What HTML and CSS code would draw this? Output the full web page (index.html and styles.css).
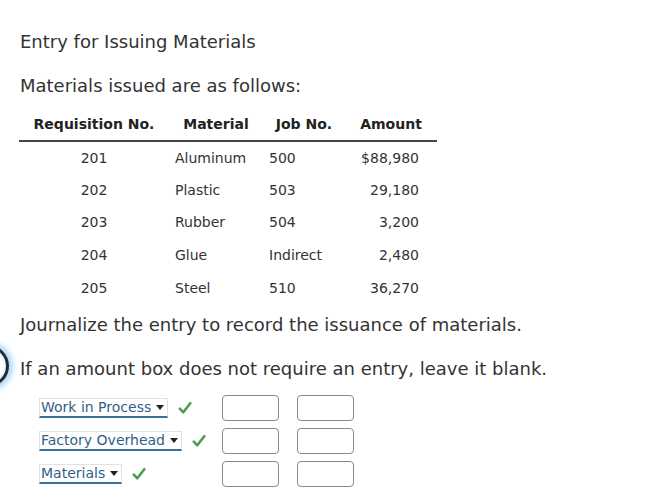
FILE: index.html
```html
<!DOCTYPE html>
<html>
<head>
<meta charset="utf-8">
<link rel="stylesheet" href="styles.css">
</head>
<body>
<div class="page">
  <h1 class="title">Entry for Issuing Materials</h1>
  <p class="para intro">Materials issued are as follows:</p>
  <table class="mat">
    <thead>
      <tr><th class="c1">Requisition No.</th><th class="c2">Material</th><th class="c3">Job No.</th><th class="c4">Amount</th></tr>
    </thead>
    <tbody>
      <tr><td class="c1">201</td><td class="c2">Aluminum</td><td class="c3">500</td><td class="c4">$88,980</td></tr>
      <tr><td class="c1">202</td><td class="c2">Plastic</td><td class="c3">503</td><td class="c4">29,180</td></tr>
      <tr><td class="c1">203</td><td class="c2">Rubber</td><td class="c3">504</td><td class="c4">3,200</td></tr>
      <tr><td class="c1">204</td><td class="c2">Glue</td><td class="c3">Indirect</td><td class="c4">2,480</td></tr>
      <tr><td class="c1">205</td><td class="c2">Steel</td><td class="c3">510</td><td class="c4">36,270</td></tr>
    </tbody>
  </table>
  <p class="para journ">Journalize the entry to record the issuance of materials.</p>
  <div class="note-wrap">
    <span class="ring"></span>
    <p class="para note">If an amount box does not require an entry, leave it blank.</p>
  </div>
  <div class="journal">
    <div class="jrow">
      <div class="acct"><span class="sel">Work in Process<span class="caret"></span></span><svg class="check" viewBox="0 0 14 14"><path d="M1.8 7.6 L5.3 11.3 L12.3 2.2" /></svg></div>
      <span class="box"></span><span class="box"></span>
    </div>
    <div class="jrow">
      <div class="acct"><span class="sel">Factory Overhead<span class="caret"></span></span><svg class="check" viewBox="0 0 14 14"><path d="M1.8 7.6 L5.3 11.3 L12.3 2.2" /></svg></div>
      <span class="box"></span><span class="box"></span>
    </div>
    <div class="jrow">
      <div class="acct"><span class="sel">Materials<span class="caret"></span></span><svg class="check" viewBox="0 0 14 14"><path d="M1.8 7.6 L5.3 11.3 L12.3 2.2" /></svg></div>
      <span class="box"></span><span class="box"></span>
    </div>
  </div>
</div>
</body>
</html>
```

FILE: styles.css
```css
html, body {
  margin: 0;
  padding: 0;
  background: #fff;
}
body {
  font-family: "DejaVu Sans", Verdana, sans-serif;
  color: #333;
  overflow: hidden;
}
.page {
  padding: 30px 0 0 20px;
}
.title {
  margin: 0;
  font-size: 18px;
  font-weight: normal;
  line-height: 24px;
}
.para {
  margin: 0;
  font-size: 18px;
  line-height: 24px;
}
.intro {
  margin-top: 20px;
}
.mat {
  margin-top: 10px;
  margin-left: -1px;
  border-collapse: collapse;
  table-layout: fixed;
  width: 418px;
  font-size: 14px;
}
.mat th, .mat td {
  box-sizing: border-box;
  padding: 0;
  vertical-align: middle;
}
.mat th {
  font-weight: bold;
  color: #222;
  height: 33px;
  border-bottom: 2px solid #444;
  text-align: center;
}
.mat td {
  height: 32.6px;
}
.mat .c1 { width: 150px; text-align: center; }
.mat .c2 { width: 94px; }
.mat .c3 { width: 82px; }
.mat .c4 { width: 92px; }
.mat td.c2, .mat td.c3 { padding-left: 6px; text-align: left; }
.mat td.c4 { text-align: right; padding-right: 18px; }
.journ {
  margin-top: 9px;
}
.note-wrap {
  margin-top: 20px;
  position: relative;
}
.ring {
  position: absolute;
  left: -53px;
  top: -12px;
  width: 36px;
  height: 36px;
  border: 3px solid #1f2a33;
  border-radius: 50%;
  box-shadow: 0 0 5px 4px rgba(110, 190, 240, 0.55), inset 0 0 3px 1px rgba(110, 190, 240, 0.35);
}
.journal {
  margin-top: 14px;
  padding-left: 19px;
  display: flex;
  flex-direction: column;
  gap: 7px;
}
.jrow {
  display: flex;
  align-items: center;
  height: 26px;
}
.acct {
  display: flex;
  align-items: center;
  width: 183px;
  flex: none;
  padding-top: 1px;
}
.sel {
  font-size: 14px;
  color: #2f5f8a;
  line-height: 17px;
  padding: 0 3px 0 1px;
  border: 1px solid #e2e2e2;
  border-bottom: 2px solid #3d6e94;
  display: inline-flex;
  align-items: center;
  background: #fff;
}
.caret {
  display: inline-block;
  width: 0;
  height: 0;
  margin-left: 5px;
  border-left: 4px solid transparent;
  border-right: 4px solid transparent;
  border-top: 5px solid #222;
}
.check {
  width: 14px;
  height: 14px;
  margin-left: 10px;
  fill: none;
  stroke: #4aa04a;
  stroke-width: 2.6;
  stroke-linecap: round;
  stroke-linejoin: round;
}
.box {
  width: 55px;
  height: 24px;
  border: 1px solid #8a8a8a;
  border-radius: 4px;
  flex: none;
  margin-right: 18px;
}
```
